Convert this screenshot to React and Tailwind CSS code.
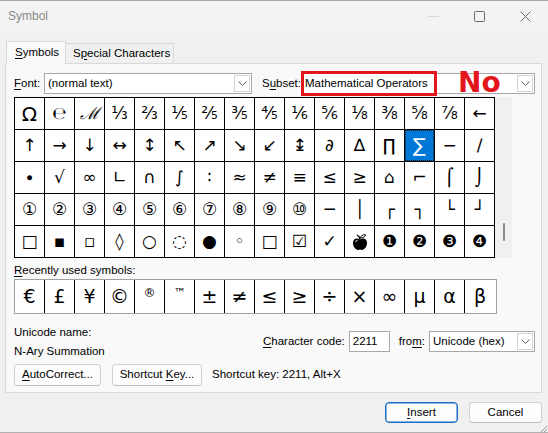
import React from 'react';

const grid = [
  ['Ω', '℮', 'ℳ', '⅓', '⅔', '⅕', '⅖', '⅗', '⅘', '⅙', '⅚', '⅛', '⅜', '⅝', '⅞', '←'],
  ['↑', '→', '↓', '↔', '↕', '↖', '↗', '↘', '↙', '↨', '∂', '∆', '∏', '∑', '−', '∕'],
  ['∙', '√', '∞', '∟', '∩', '∫', '∶', '≈', '≠', '≡', '≤', '≥', '⌂', '⌐', '⌠', '⌡'],
  ['①', '②', '③', '④', '⑤', '⑥', '⑦', '⑧', '⑨', '⑩', '─', '│', '┌', '┐', '└', '┘'],
  ['□', '▪', '▫', '◊', '○', '◌', '●', '◦', '□', '☑', '✓', 'apple', '❶', '❷', '❸', '❹'],
];

const recent = ['€', '£', '¥', '©', '®', '™', '±', '≠', '≤', '≥', '÷', '×', '∞', 'μ', 'α', 'β'];

function Chevron() {
  return (
    <svg width="9" height="5" viewBox="0 0 9 5">
      <polyline points="0.5,0.5 4.5,4.5 8.5,0.5" fill="none" stroke="#606060" strokeWidth="1" />
    </svg>
  );
}

function Apple() {
  return (
    <svg width="16" height="18" viewBox="0 0 16 18">
      <path d="M8 6.5 C5 4.5 1 5.5 1 10 C1 14 4 17 6 17 C7 17 7.5 16.5 8 16.5 C8.5 16.5 9 17 10 17 C12 17 15 14 15 10 C15 5.5 11 4.5 8 6.5 Z" fill="black" />
      <path d="M3.5 9 C3.8 8 4.5 7.5 5.5 7.3" stroke="white" strokeWidth="1" fill="none" />
      <path d="M8 6.5 C8 4.5 7 3 5 2" stroke="black" strokeWidth="1.3" fill="none" />
      <path d="M8.5 5 C9 2.5 11 1.3 13.5 1.8 C13 4 11 5.2 8.5 5 Z" fill="white" stroke="black" strokeWidth="1" />
    </svg>
  );
}

function Combo({ width, children }) {
  return (
    <div className={`${width} h-[21px] bg-white border border-[#a8a8a8] flex items-center pl-[3px] pr-[1px]`}>
      <span className="flex-1 truncate">{children}</span>
      <div className="w-[16px] h-[17px] border border-[#d4d4d4] flex items-center justify-center">
        <Chevron />
      </div>
    </div>
  );
}

export default function App() {
  return (
    <div className="w-[548px] h-[433px] bg-[#f0f0f0] border-t border-[#a6a6a6] relative overflow-hidden flex flex-col font-['Liberation_Sans',Arial,sans-serif] text-[11.5px] text-black">
      {/* title bar */}
      <div className="h-[30px] flex items-center pl-[8px] bg-[#f3f3f3] shrink-0">
        <span className="text-[#8a8a8a] text-[12px]">Symbol</span>
        <div className="ml-auto flex h-full">
          <div className="w-[46px] flex items-center justify-center">
            <svg width="11" height="1"><rect width="11" height="1" fill="#d6d6d6" /></svg>
          </div>
          <div className="w-[46px] flex items-center justify-center">
            <svg width="11" height="11"><rect x="0.5" y="0.5" width="10" height="10" rx="1" fill="none" stroke="#6a6a6a" /></svg>
          </div>
          <div className="w-[46px] flex items-center justify-center">
            <svg width="11" height="11">
              <path d="M0.5 0.5 L10.5 10.5 M10.5 0.5 L0.5 10.5" stroke="#6a6a6a" strokeWidth="1" />
            </svg>
          </div>
        </div>
      </div>

      <div className="px-[5px] pt-[10px]">
        {/* tabs */}
        <div className="flex items-start pl-[1px]">
          <div className="relative z-10 -mb-px w-[60px] h-[23px] bg-[#f9f9f9] border-t border-l border-r border-[#d9d9d9] flex items-center pl-[8px] whitespace-nowrap">
            <span><u className="underline-offset-2">S</u>ymbols</span>
          </div>
          <div className="mt-[2px] w-[108px] h-[20px] bg-[#f0f0f0] border-t border-r border-[#d9d9d9] flex items-center pl-[7px] whitespace-nowrap">
            <span>S<u className="underline-offset-2">p</u>ecial Characters</span>
          </div>
        </div>

        {/* panel */}
        <div className="w-[537px] bg-[#f9f9f9] border border-[#d9d9d9] pl-[8px] pr-[6px] pt-[9px] pb-[6px]">
          {/* font / subset row */}
          <div className="flex items-center h-[21px] whitespace-nowrap">
            <span className="w-[30px]"><u className="underline-offset-2">F</u>ont:</span>
            <Combo width="w-[208px]">(normal text)</Combo>
            <span className="ml-[10px] w-[39px]">S<u className="underline-offset-2">u</u>bset:</span>
            <div className="relative">
              <Combo width="w-[234px]">Mathematical Operators</Combo>
              <div className="absolute left-0 top-[-2px] w-[136px] h-[25px] border-[3px] border-[#e3161c]" />
              <div className="absolute left-[157px] top-[-4px] text-[28px] leading-[28px] font-bold text-[#e3161c] font-['DejaVu_Sans',sans-serif]">
                No
              </div>
            </div>
          </div>

          {/* symbol grid */}
          <div className="flex mt-[3px]">
            <div className="grid grid-cols-[repeat(16,30px)] border-l border-t border-black font-['DejaVu_Sans','Noto_Sans_CJK_SC',sans-serif]">
              {grid.flat().map((s, i) => {
                const selected = i === 29;
                return (
                  <div
                    key={i}
                    className={`w-[30px] h-[32px] border-r border-b border-black flex items-center justify-center text-[17px] leading-none ${selected ? 'bg-[#0078d7] text-white' : 'bg-white'} ${i === 2 ? 'italic font-["DejaVu_Serif",serif]' : ''} ${i === 0 ? 'text-[20px]' : ''}`}
                  >
                    {selected ? (
                      <div className="w-full h-full border border-dotted border-[#1a1a1a] flex items-center justify-center text-[19px]">{s}</div>
                    ) : s === 'apple' ? (
                      <Apple />
                    ) : (
                      s
                    )}
                  </div>
                );
              })}
            </div>
            <div className="w-[17px] h-[161px] bg-[#f0f0f0] flex flex-col items-center">
              <div className="mt-[126px] w-[2px] h-[18px] bg-[#8a8a8a] rounded-[1px]" />
            </div>
          </div>

          {/* recently used */}
          <div className="mt-[5px] leading-[15px]">
            <u className="underline-offset-2">R</u>ecently used symbols:
          </div>
          <div className="mt-[1px] w-[483px] h-[35px] border border-[#a0a0a0] flex bg-white font-['DejaVu_Sans','Noto_Sans_CJK_SC',sans-serif]">
            {recent.map((s, i) => (
              <div
                key={i}
                className={`w-[30px] h-full flex items-center justify-center ${i < 15 ? 'border-r border-black' : ''} ${s === '®' || s === '™' ? 'text-[12px] pb-[8px]' : 'text-[19px]'}`}
              >
                {s}
              </div>
            ))}
          </div>

          {/* unicode info */}
          <div className="mt-[9px] flex items-start whitespace-nowrap">
            <div className="leading-[19px]">
              <div>Unicode name:</div>
              <div>N-Ary Summation</div>
            </div>
            <div className="ml-auto mt-[8px] flex items-center">
              <span><u className="underline-offset-2">C</u>haracter code:</span>
              <div className="ml-[4px] w-[41px] h-[21px] bg-white border border-[#a8a8a8] flex items-center pl-[3px]">2211</div>
              <span className="ml-[9px]">fro<u className="underline-offset-2">m</u>:</span>
              <div className="ml-[4px]">
                <Combo width="w-[106px]">Unicode (hex)</Combo>
              </div>
            </div>
          </div>

          {/* buttons */}
          <div className="mt-[3px] flex items-center whitespace-nowrap">
            <button className="w-[87px] h-[22px] bg-[#fdfdfd] border border-[#d0d0d0] border-b-[#bdbdbd] rounded-[4px] flex items-center justify-center">
              <span><u className="underline-offset-2">A</u>utoCorrect...</span>
            </button>
            <button className="ml-[11px] w-[90px] h-[22px] bg-[#fdfdfd] border border-[#d0d0d0] border-b-[#bdbdbd] rounded-[4px] flex items-center justify-center">
              <span>Shortcut <u className="underline-offset-2">K</u>ey...</span>
            </button>
            <span className="ml-[10px]">Shortcut key: 2211, Alt+X</span>
          </div>
        </div>

        {/* insert / cancel */}
        <div className="mt-[9px] flex justify-end pr-[1px] gap-[11px]">
          <button className="w-[73px] h-[21px] bg-[#fdfdfd] border border-[#1b6ec2] rounded-[4px] flex items-center justify-center shadow-[inset_0_0_0_0.5px_#1b6ec2]">
            <span><u className="underline-offset-2">I</u>nsert</span>
          </button>
          <button className="w-[73px] h-[21px] bg-[#fdfdfd] border border-[#d0d0d0] border-b-[#bdbdbd] rounded-[4px] flex items-center justify-center">
            Cancel
          </button>
        </div>
      </div>

      {/* resize grip */}
      <svg className="absolute right-0 bottom-0" width="10" height="10" viewBox="0 0 10 10">
        <path d="M9 3 L3 9 M9 6 L6 9" stroke="#a0a0a0" strokeWidth="1" />
      </svg>
      <div className="absolute left-0 right-0 bottom-0 h-px bg-[#b0b0b0]" />
    </div>
  );
}
